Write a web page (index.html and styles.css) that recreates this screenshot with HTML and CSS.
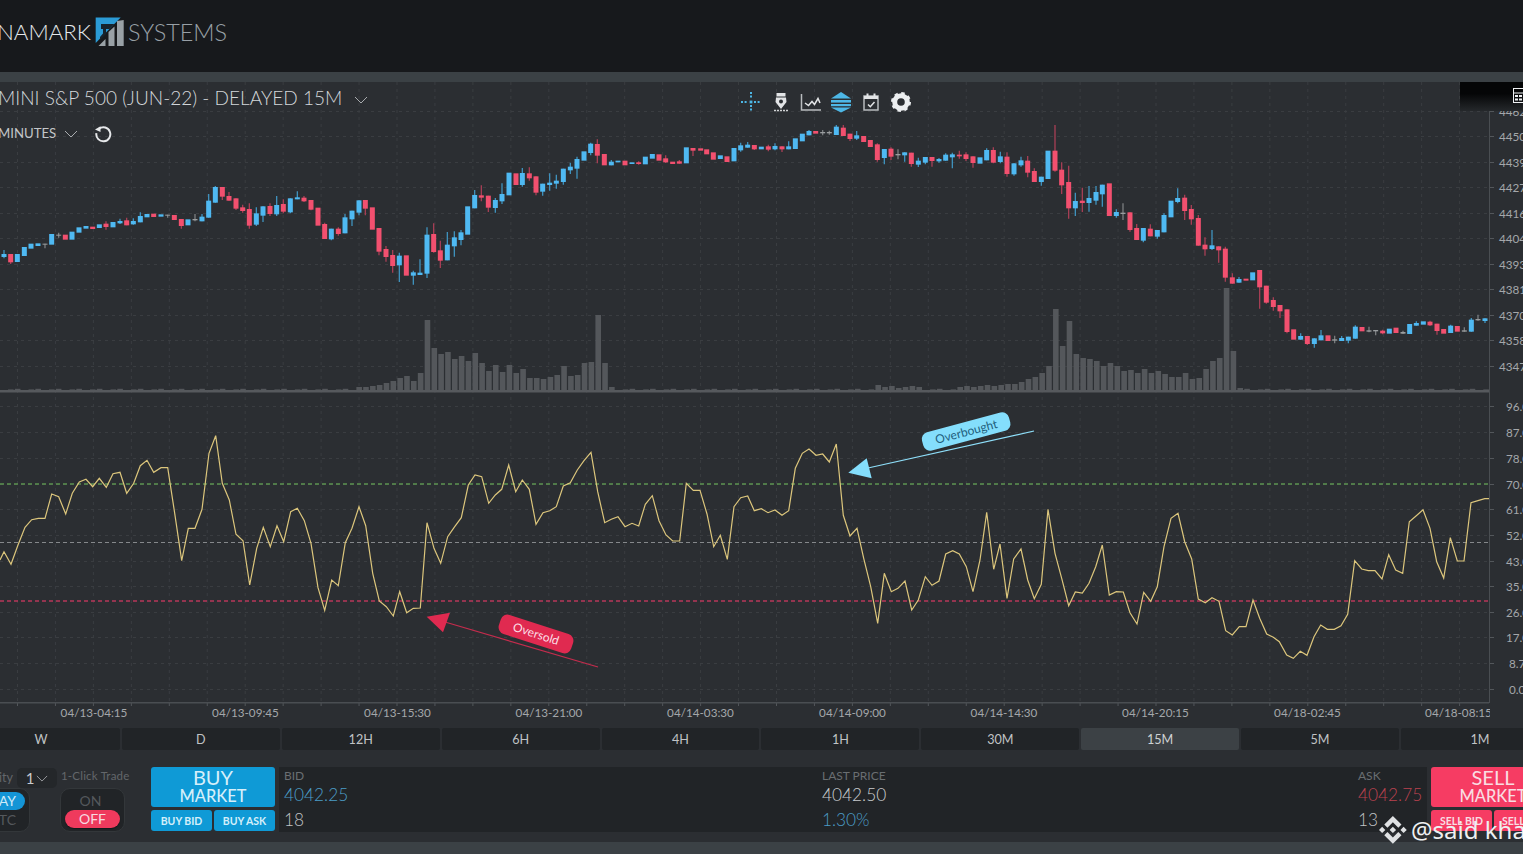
FILE: index.html
```html
<!DOCTYPE html>
<html lang="en">
<head>
<meta charset="utf-8">
<title>Dynamark Systems</title>
<link rel="stylesheet" href="styles.css">
</head>
<body>
<div class="app">
  <header class="masthead">
    <span class="brand-name">NAMARK</span>
    <svg class="brand-mark" viewBox="0 0 31 30" aria-hidden="true">
      <polygon class="mark-blue" points="0.7,0.5 25.7,0.5 0.7,26"/>
      <polygon class="mark-dark" points="6,7 19.5,7 14.5,12 11,12 11,17 5,23 5,20 8,16.5 8,12 6,12"/>
      <polygon class="mark-grey" points="22,4 28.7,3 28.7,29 22,29"/>
      <polygon class="mark-grey" points="13.5,15 19.5,9.5 19.5,29 13.5,29"/>
      <polygon class="mark-grey" points="3.5,29 10.5,22 10.5,29"/>
    </svg>
    <span class="brand-sub">SYSTEMS</span>
  </header>
  <div class="strip"></div>
  <main class="chart">
    <svg class="plot" id="plot" viewBox="0 82 1523 646" aria-label="Price chart">
      <g id="grid"></g>
      <g id="volume"></g>
      <rect class="pane-rule" x="0" y="390" width="1489" height="2.5"/>
      <g id="candles"></g>
      <line class="lvl-green" x1="0" x2="1489" y1="484" y2="484"/>
      <line class="lvl-grey" x1="0" x2="1489" y1="542.5" y2="542.5"/>
      <line class="lvl-red" x1="0" x2="1489" y1="601" y2="601"/>
      <polyline class="rsi" id="rsi" points=""/>
      <line class="arrow-red" x1="445" y1="622" x2="598" y2="667"/>
      <polygon class="fill-red" points="426.7,616.7 450,612.7 443,632.3"/>
      <g transform="rotate(18 536 634)">
        <rect class="fill-red" x="498" y="624" width="76" height="20" rx="7"/>
        <text class="pill-text-red" x="536" y="638" text-anchor="middle">Oversold</text>
      </g>
      <line class="arrow-blue" x1="868" y1="468" x2="1034" y2="431"/>
      <polygon class="fill-blue" points="848.3,472.7 866.7,458.3 871.7,478.3"/>
      <g transform="rotate(-15 966 431)">
        <rect class="fill-blue" x="921" y="422" width="90" height="19" rx="7"/>
        <text class="pill-text-blue" x="966" y="436" text-anchor="middle">Overbought</text>
      </g>
      <rect class="axis-rule" x="1489" y="92" width="1" height="611"/>
      <rect class="axis-rule" x="0" y="702" width="1489" height="1.5"/>
      <g id="yaxis" class="axis-text"></g>
      <svg x="0" y="703" width="1490" height="24" viewBox="0 703 1490 24">
        <g id="xaxis" class="axis-text"></g>
      </svg>
    </svg>

    <div class="title-row">
      <span class="title">MINI S&amp;P 500 (JUN-22) - DELAYED 15M</span>
      <svg class="chev chev-title" viewBox="0 0 14 8"><polyline points="1,1 7,7 13,1"/></svg>
    </div>
    <div class="interval-row">
      <span class="interval">MINUTES</span>
      <svg class="chev chev-interval" viewBox="0 0 14 8"><polyline points="1,1 7,7 13,1"/></svg>
      <svg class="refresh" viewBox="0 0 18 18">
        <path d="M5.2 3.6 A7 7 0 1 1 2.4 8.2"/>
        <polygon points="1,4.5 6.5,1.2 6.5,7"/>
      </svg>
    </div>

    <div class="toolbar">
      <svg class="tool tool-blue" viewBox="0 0 20 20">
        <line class="dots" x1="0" x2="7" y1="10" y2="10"/>
        <line class="dots" x1="13" x2="20" y1="10" y2="10"/>
        <line class="dots" x1="10" x2="10" y1="0" y2="7"/>
        <line class="dots" x1="10" x2="10" y1="13" y2="20"/>
        <rect class="solid" x="8.6" y="8.6" width="2.8" height="2.8"/>
      </svg>
      <svg class="tool tool-white" viewBox="0 0 20 20">
        <rect class="solid" x="5.5" y="1" width="9" height="3.5"/>
        <path class="solid" fill-rule="evenodd" d="M5 5.5 H15 L15.5 10 L10 17 L4.5 10 Z M10 7.5 A2 2 0 1 0 10 11.5 A2 2 0 1 0 10 7.5 Z"/>
        <line class="dots-thin" x1="3" x2="17" y1="18.5" y2="18.5"/>
      </svg>
      <svg class="tool tool-white" viewBox="0 0 20 20">
        <polyline class="stroke grey" points="0.5,2 0.5,18 20,18"/>
        <polyline class="stroke" points="4,11 7.5,13.5 11,9.5 13.5,12.5 17,6.5 19,11"/>
      </svg>
      <svg class="tool tool-blue" viewBox="0 0 20 20">
        <polygon class="solid" points="10,0 20,6.5 0,6.5"/>
        <rect class="solid" x="0" y="8" width="20" height="2.6"/>
        <rect class="solid" x="0" y="12" width="20" height="2.2"/>
        <polygon class="solid" points="0,15.5 20,15.5 10,20.5"/>
      </svg>
      <svg class="tool tool-white" viewBox="0 0 20 20">
        <rect class="stroke grey" x="3" y="4" width="14" height="14"/>
        <rect class="solid" x="3" y="4" width="14" height="3"/>
        <rect class="solid" x="5.5" y="1.5" width="2" height="4"/>
        <rect class="solid" x="12.5" y="1.5" width="2" height="4"/>
        <polyline class="stroke" points="7,12.5 9.3,14.7 13.5,10"/>
      </svg>
      <svg class="tool tool-white" viewBox="0 0 20 20">
        <circle class="gear-ring" cx="10" cy="10" r="6.3"/>
        <circle class="gear-teeth" cx="10" cy="10" r="8.7"/>
      </svg>
    </div>

    <div class="corner">
      <svg class="corner-icon" viewBox="0 0 16 16">
        <rect x="0.5" y="0.5" width="15" height="14"/>
        <line x1="0.5" x2="15.5" y1="5" y2="5"/>
        <line class="dash" x1="2" x2="15" y1="8" y2="8"/>
        <line class="dash" x1="2" x2="15" y1="11.5" y2="11.5"/>
      </svg>
    </div>
  </main>

  <nav class="frames">
    <span class="frame">W</span>
    <span class="frame">D</span>
    <span class="frame">12H</span>
    <span class="frame">6H</span>
    <span class="frame">4H</span>
    <span class="frame">1H</span>
    <span class="frame">30M</span>
    <span class="frame frame-on">15M</span>
    <span class="frame">5M</span>
    <span class="frame">1M</span>
  </nav>

  <section class="tradebar">
    <div class="controls">
      <div class="ctl-a">
        <div class="qty-row">
          <span class="faint">ity</span>
          <span class="qty-box">1<svg class="chev chev-qty" viewBox="0 0 14 8"><polyline points="1,1 7,7 13,1"/></svg></span>
        </div>
        <div class="switch switch-tif">
          <span class="pill pill-blue">AY</span>
          <span class="off-label">TC</span>
        </div>
      </div>
      <div class="ctl-b">
        <div class="click-label">1-Click Trade</div>
        <div class="switch switch-click">
          <span class="off-label">ON</span>
          <span class="pill pill-red">OFF</span>
        </div>
      </div>
    </div>

    <div class="ticket ticket-buy">
      <button class="main-btn"><span class="big">BUY</span><span class="mid">MARKET</span></button>
      <div class="sub-row">
        <button class="sub-btn">BUY BID</button>
        <button class="sub-btn">BUY ASK</button>
      </div>
    </div>

    <div class="quotes">
      <div class="quote">
        <span class="q-label">BID</span>
        <span class="q-price q-blue">4042.25</span>
        <span class="q-size">18</span>
      </div>
      <div class="quote">
        <span class="q-label">LAST PRICE</span>
        <span class="q-price">4042.50</span>
        <span class="q-size q-blue">1.30%</span>
      </div>
      <div class="quote">
        <span class="q-label">ASK</span>
        <span class="q-price q-red">4042.75</span>
        <span class="q-size">13</span>
      </div>
    </div>

    <div class="ticket ticket-sell">
      <button class="main-btn"><span class="big">SELL</span><span class="mid">MARKET</span></button>
      <div class="sub-row">
        <button class="sub-btn">SELL BID</button>
        <button class="sub-btn">SELL ASK</button>
      </div>
    </div>
  </section>
  <div class="foot-gap"></div>
  <div class="foot-strip"></div>

  <div class="watermark">
    <svg class="wm-logo" viewBox="0 0 126.61 126.61">
      <path d="M38.171 53.203l24.588-24.587 24.6 24.6 14.307-14.307L62.759 0 23.864 38.896zM0 62.759l14.307-14.307 14.307 14.307-14.307 14.307zM38.171 72.316l24.588 24.586 24.6-24.599 14.315 14.299-.007.008-38.908 38.908-38.896-38.895-.02-.02zM96.903 62.765l14.307-14.307 14.307 14.307-14.307 14.307zM77.27 62.752h.006L62.759 48.235 52.03 58.964l-1.232 1.233-2.543 2.543-.02.02.02.021 14.504 14.504 14.517-14.517.007-.008z"/>
    </svg>
    <span class="wm-text">@said kha</span>
  </div>
</div>
<script src="chart.js"></script>
</body>
</html>
```
FILE: styles.css
```css
* { box-sizing: border-box; }
html, body { margin: 0; padding: 0; }
body { width: 1523px; height: 854px; overflow: hidden; background: #2b2e32; font-family: "Lato", "Liberation Sans", sans-serif; }
.app { position: relative; display: flex; flex-direction: column; width: 1523px; height: 854px; overflow: hidden; }

/* masthead */
.masthead { display: flex; align-items: center; height: 72px; flex: none; background: #17191c; padding-bottom: 8px; }
.brand-name { margin-left: -3px; width: 98px; font-size: 22.3px; font-weight: 300; color: #e6e9ec; line-height: 30px; white-space: nowrap; }
.brand-mark { width: 31px; height: 30px; flex: none; }
.mark-blue { fill: #2b9bd6; }
.mark-dark { fill: #17232c; }
.mark-grey { fill: #99a1a6; }
.brand-sub { margin-left: 2px; font-size: 23.4px; font-weight: 300; color: #98a0a6; line-height: 30px; }
.strip { height: 10px; flex: none; background: #3b4145; }

/* chart */
.chart { position: relative; height: 646px; flex: none; background: #2b2e32; }
.plot { display: block; width: 1523px; height: 646px; }
.grid-line { stroke: #3a3d41; stroke-width: 1; stroke-dasharray: 3 4; }
.pane-rule { fill: #56595d; }
.axis-rule { fill: #4a4e52; }
.tick { stroke: #53575b; stroke-width: 1; }
.vol { fill: #54575b; }
.wick-b { stroke: #3f93bf; stroke-width: 1.3; }
.wick-r { stroke: #a83f56; stroke-width: 1.3; }
.wick-g { stroke: #7b7e81; stroke-width: 1.3; }
.body-b { fill: #4fb9f2; }
.body-r { fill: #f2506f; }
.body-g { fill: #9a9d9f; }
.lvl-green, .lvl-red { stroke-width: 1.4; stroke-dasharray: 4 3; }
.lvl-green { stroke: #5c9350; }
.lvl-red { stroke: #b8375a; }
.lvl-grey { stroke: #85888b; stroke-width: 1; stroke-dasharray: 4 3; }
.rsi { fill: none; stroke: #dcc67c; stroke-width: 1.2; stroke-linejoin: miter; }
.arrow-red { stroke: #c42c4d; stroke-width: 1.2; }
.arrow-blue { stroke: #8fe0fb; stroke-width: 1.2; }
.fill-red { fill: #e02a50; }
.fill-blue { fill: #84defc; }
.pill-text-red { font-size: 12px; font-weight: 400; fill: #fbdfe5; }
.pill-text-blue { font-size: 12px; font-weight: 400; fill: #1f5f7c; }
.axis-text text { font-size: 11.7px; fill: #a4a7aa; }
.axis-x-label { text-anchor: middle; }

.title-row { position: absolute; left: -2px; top: 2px; display: flex; align-items: center; height: 26px; }
.title { font-size: 19.05px; font-weight: 300; color: #d3d7da; white-space: nowrap; }
.interval-row { position: absolute; left: -2px; top: 40px; display: flex; align-items: center; height: 22px; }
.interval { font-size: 13.2px; color: #c3c6c9; }
.chev { fill: none; }
.chev polyline { fill: none; stroke: #a9acaf; stroke-width: 1; }
.chev-title { width: 14px; height: 8px; margin-left: 12px; margin-top: 6px; }
.chev-interval { width: 14px; height: 8px; margin-left: 8px; margin-top: 2px; }
.refresh { width: 18px; height: 18px; margin-left: 16px; margin-top: 2px; }
.refresh path { fill: none; stroke: #e6e8ea; stroke-width: 2; }
.refresh polygon { fill: #e6e8ea; }

.toolbar { position: absolute; left: 741px; top: 10px; display: flex; gap: 10px; }
.tool { width: 20px; height: 20px; display: block; overflow: visible; }
.tool-blue .solid { fill: #4db7e6; }
.tool-white .solid { fill: #e2e4e6; }
.dots { stroke: #4db7e6; stroke-width: 2; stroke-dasharray: 2 1.6; }
.dots-thin { stroke: #d0d2d4; stroke-width: 1.5; stroke-dasharray: 2 1; }
.stroke { fill: none; stroke: #e2e4e6; stroke-width: 1.5; }
.stroke.grey { stroke: #b9bcbf; }
.gear-ring { fill: none; stroke: #eceef0; stroke-width: 5; }
.gear-teeth { fill: none; stroke: #eceef0; stroke-width: 2.6; stroke-dasharray: 3.4 3.43; }

.corner { position: absolute; right: 0; top: 0; width: 63px; height: 29px; background: linear-gradient(#050607 0 40%, #25282b 100%); }
.corner-icon { position: absolute; left: 53px; top: 6px; width: 16px; height: 16px; }
.corner-icon rect { fill: none; stroke: #f0f2f4; stroke-width: 1; }
.corner-icon line { stroke: #f0f2f4; stroke-width: 1; }
.corner-icon .dash { stroke-dasharray: 3 1; stroke-width: 2; }

/* timeframe row */
.frames { display: flex; gap: 2px; height: 22px; flex: none; margin-left: -38px; }
.frame { flex: none; width: 157.9px; height: 22px; border-radius: 2px; background: #212427; color: #c0c3c5; font-size: 12.6px; line-height: 23px; text-align: center; }
.frame-on { background: #3c4145; color: #cfd2d4; }

/* trading bar */
.tradebar { display: flex; height: 65px; flex: none; margin-top: 17px; width: 1640px; }
.controls { display: flex; flex: none; width: 151px; }
.ctl-a { width: 60px; flex: none; }
.ctl-b { width: 91px; flex: none; }
.qty-row { display: flex; align-items: center; height: 21px; margin-left: -1px; gap: 3px; }
.faint { color: #63676b; font-size: 12.5px; line-height: 18px; width: 15px; }
.qty-box { display: flex; align-items: center; justify-content: center; gap: 2px; width: 40px; height: 20px; border-radius: 5px; background: #24272a; color: #c8cbcd; font-size: 15px; }
.chev-qty { width: 12px; height: 7px; margin-top: 2px; }
.click-label { height: 21px; margin-left: 1px; color: #63676b; font-size: 11.5px; line-height: 18px; letter-spacing: .2px; white-space: nowrap; }
.switch { display: flex; flex-direction: column; align-items: stretch; height: 44px; border-radius: 10px; background: #212427; border: 1px solid #33373a; padding: 3px 4px 4px; }
.switch-tif { width: 64px; margin-left: -34px; }
.switch-click { width: 65px; }
.pill { height: 18px; border-radius: 9px; font-size: 14px; line-height: 18px; }
.pill-blue { background: #1495d6; color: #cfeaf7; text-align: right; padding-right: 9px; }
.pill-red { background: #ef3a5d; color: #f7dbe1; text-align: center; box-shadow: 0 1px 1px #15171a; }
.off-label { height: 18px; color: #54585c; font-size: 14px; line-height: 18px; }
.switch-tif .off-label { text-align: right; padding-right: 9px; margin-top: 1px; }
.switch-click .off-label { text-align: center; padding-right: 4px; }

.ticket { display: flex; flex-direction: column; gap: 3px; flex: none; width: 124px; }
button { font-family: inherit; border: 0; padding: 0; }
.main-btn { display: flex; flex-direction: column; align-items: center; height: 40px; border-radius: 3px; }
.big { font-size: 20px; line-height: 20px; font-weight: 400; }
.mid { font-size: 16.4px; line-height: 18px; font-weight: 500; }
.sub-row { display: flex; gap: 2px; height: 21px; }
.sub-btn { flex: 1; height: 21px; border-radius: 3px; font-size: 10.5px; font-weight: 700; white-space: nowrap; overflow: hidden; }
.ticket-buy .main-btn, .ticket-buy .sub-btn { background: #0f9ad6; color: #d5effa; }
.ticket-sell .main-btn, .ticket-sell .sub-btn { background: #f63c63; color: #f9dce2; }

.quotes { display: grid; grid-template-columns: 538px 536px 1fr; flex: none; width: 1148px; margin: 0 4px; padding-left: 5px; background: #212427; }
.quote { display: flex; flex-direction: column; }
.q-label { color: #6a6e72; font-size: 12px; line-height: 18px; }
.q-price { color: #c8cbcd; font-size: 17.3px; font-weight: 300; line-height: 20px; }
.q-size { color: #c0c3c5; font-size: 17.3px; font-weight: 300; line-height: 29px; }
.q-blue { color: #4b9cc6; }
.q-red { color: #b9424f; }

.foot-gap { height: 10px; flex: none; }
.foot-strip { height: 12px; flex: none; background: #3b4145; }

.watermark { position: absolute; left: 1379px; top: 816px; display: flex; align-items: center; gap: 4px; height: 28px; white-space: nowrap; }
.wm-logo { width: 28px; height: 28px; fill: #dfe1e3; }
.wm-text { font-family: "Noto Sans", sans-serif; font-size: 24px; line-height: 28px; color: #eef0f1; }
```
FILE: chart.js
```js
var NS = 'http://www.w3.org/2000/svg';
function el(parent, name, attrs, text) {
  var n = document.createElementNS(NS, name);
  for (var k in attrs) n.setAttribute(k, attrs[k]);
  if (text) n.textContent = text;
  parent.appendChild(n);
  return n;
}

/* grid */
var grid = document.getElementById('grid');
var i, x, y;
for (x = 17.5; x < 1489; x += 37.95) {
  el(grid, 'line', { 'class': 'grid-line', x1: x, x2: x, y1: 82, y2: 702 });
  el(grid, 'line', { 'class': 'tick', x1: x, x2: x, y1: 703, y2: 706 });
}
var priceRows = [111.5, 136.5, 162.5, 187.5, 213.5, 238.5, 264.5, 289.5, 315.5, 340.5, 366.5];
var rsiRows = [406.5, 432.5, 458.5, 484.5, 509.5, 535.5, 561.5, 586.5, 612.5, 637.5, 663.5, 689.5];
priceRows.concat(rsiRows).forEach(function (r) {
  el(grid, 'line', { 'class': 'grid-line', x1: 0, x2: 1489, y1: r, y2: r });
  el(grid, 'line', { 'class': 'tick', x1: 1490, x2: 1494, y1: r, y2: r });
});

/* axis labels */
var yaxis = document.getElementById('yaxis');
['4462.5', '4450.9', '4439.3', '4427.7', '4416.1', '4404.5', '4393.0', '4381.4', '4370.0', '4358.2', '4347.0'].forEach(function (t, n) {
  el(yaxis, 'text', { x: 1499, y: priceRows[n] + 4 }, t);
});
['96.0', '87.0', '78.0', '70.0', '61.0', '52.0', '43.0', '35.0', '26.0', '17.0', '8.7', '0.0'].forEach(function (t, n) {
  el(yaxis, 'text', { x: t.length === 3 ? 1509 : 1506, y: rsiRows[n] + 4 }, t);
});
var xaxis = document.getElementById('xaxis');
[[94, '04/13-04:15'], [245.5, '04/13-09:45'], [397.5, '04/13-15:30'], [549, '04/13-21:00'], [700.5, '04/14-03:30'],
 [852.5, '04/14-09:00'], [1004, '04/14-14:30'], [1155.5, '04/14-20:15'], [1307.5, '04/18-02:45'], [1458.5, '04/18-08:15']].forEach(function (l) {
  el(xaxis, 'text', { 'class': 'axis-x-label', x: l[0], y: 717 }, l[1]);
});

/* volume */
var peaks = {
  52: 4, 53: 4, 54: 5, 55: 6, 56: 8, 57: 10, 58: 13, 59: 15, 60: 10, 61: 18,
  62: 71, 63: 43, 64: 37, 65: 39, 66: 32, 67: 35, 68: 30, 69: 38, 70: 28, 71: 20, 72: 26, 73: 19, 74: 26, 75: 18,
  76: 22, 77: 13, 78: 13, 79: 12, 80: 14, 81: 16, 82: 25, 83: 15, 84: 16, 85: 28, 86: 29, 87: 76, 88: 28, 89: 4,
  128: 6, 129: 4, 130: 5, 131: 3, 132: 4, 133: 5, 134: 4, 140: 4, 141: 5, 142: 4, 143: 5, 144: 6, 145: 5, 146: 6, 147: 7,
  148: 7, 149: 9, 150: 12, 151: 14, 152: 18, 153: 25,
  154: 82, 155: 45, 156: 70, 157: 37, 158: 33, 159: 32, 160: 30, 161: 25, 162: 28, 163: 25, 164: 20, 165: 21, 166: 18,
  167: 22, 168: 18, 169: 20, 170: 17, 171: 14, 172: 14, 173: 18, 174: 12, 175: 13, 176: 22, 177: 30, 178: 33,
  179: 103, 180: 40, 181: 3
};
var vol = document.getElementById('volume');
for (i = 0; i < 218; i++) {
  var h = peaks[i] || (1 + (i * 7 % 3) * 0.6);
  el(vol, 'rect', { 'class': 'vol', x: 4 + 6.83 * i - 2.8, y: 391 - h, width: 5.6, height: h });
}

/* candles: colour, crop x, body top, body bottom, wick top, wick bottom (crop units, 3x) */
var candleRuns = [
  { dx: 0, dy: 130, d: 'b 12 372 381 360 385;r 32 372 397 372 402;b 52 372 396;b 73 351 378;b 93 341 356;b 114 340 348;g 135 341 344 341 355;b 155 312 344;g 176 314 317 308 323;r 196 314 329;b 216 305 329;b 237 292 308;b 258 288 296;r 278 290 297;b 298 283 294;r 318 281 291 274 299;b 339 276 292;b 360 273 280 266 282;r 380 271 286 263 286;b 400 273 283 265 284;b 421 258 277 247 277;b 441 252 262;r 461 251 261;b 483 253 260;g 503 254 257 254 263;r 523 255 270;r 544 267 288 267 296;b 564 268 286;g 585 267 271 252 274;b 606 260 274 252 274;b 626 212 263 192 263;b 646 171 218 168 218;r 667 171 200 171 210;r 687 198 212 186 212;r 708 205 236 205 240;r 728 232 243 224 248;r 748 237 287 220 296;b 769 250 284 232 288;b 789 229 257 229 276;r 810 228 252 220 258;b 830 225 253 198 258;r 850 222 245 208 250;b 871 205 247 205 250;b 892 202 208 184 208;r 912 203 214 198 216;r 933 210 239 210 241;r 954 233 287;r 974 282 327 278 327;b 994 296 328 296 331;r 1015 296 312 292 317;b 1035 262 310 252 310' },
  { dx: 350, dy: 130, d: 'b 6 242 268 242 288;b 27 211 248 211 256;r 46 210 236 210 256;r 67 232 299;r 87 294 365 294 376;r 108 357 381 348 395;r 128 375 408 360 428;b 148 377 406 368 456;r 169 376 437;b 190 427 437 422 464;b 210 428 435 388 435;b 231 314 431 292 444;r 251 312 366 280 368;r 271 361 392 332 414;b 292 344 391 306 391;b 313 322 349 304 380;b 333 307 330 300 346;b 353 229 314;b 374 195 235 180 235;r 394 196 203 166 214;r 415 197 233 197 246;b 436 210 234 204 248;b 456 192 214 160 222;b 477 128 196;r 498 130 165;b 517 129 165 114 170;r 538 130 145 112 152;r 558 139 188 139 196;b 578 161 185 161 197;b 599 158 165 130 182;b 619 152 161 134 176;b 640 116 156 116 164;b 661 110 121 98 132;b 681 87 116 80 146;b 702 64 92;b 722 41 69 38 76;r 742 42 77 28 100;r 763 72 106;b 784 95 106 90 106;b 804 92 97;r 825 92 106;b 846 97 102;r 866 97 102 94 104;b 886 80 103;b 907 72 86;r 927 73 92;r 947 85 97 76 99;r 968 95 102;r 988 94 101 90 101;b 1009 52 100;r 1029 54 62 54 78' },
  { dx: 700, dy: 120, d: 'r 2 85 92;r 20 88 103;r 40 97 119;b 61 106 117;r 81 109 126;b 102 84 124;b 122 76 91 68 95;b 143 74 83 66 83;r 163 75 88 75 90;b 184 80 88;r 205 79 89 74 94;b 225 78 88 70 91;r 246 79 88 79 96;b 266 79 88 64 88;b 286 55 87;b 307 41 64;b 327 33 46 30 46;r 347 33 41;g 368 36 40 30 46;g 388 36 40 32 44;b 409 20 45 15 45;r 430 23 48 15 48;r 450 41 57 41 63;b 470 46 56 33 60;r 491 48 66;r 511 60 81;r 532 73 120 70 125;b 553 87 114 87 133;r 573 86 110 82 120;g 594 102 106 88 118;b 614 97 106 97 125;r 634 98 132 98 140;b 655 122 134 113 141;b 676 111 128 111 133;r 696 111 123 111 140;b 717 117 124 114 128;b 737 104 122 100 122;b 757 103 112 98 145;r 778 104 109 92 116;r 798 103 117 97 123;r 819 109 129 109 143;b 840 112 131;b 860 90 121 85 121;r 880 90 128 82 130;b 901 109 126 95 130;r 921 110 162 97 170;b 942 130 163 130 167;b 963 121 136 110 140;r 983 122 158 108 172;r 1003 153 186 145 186;b 1024 170 186 170 197;b 1044 92 177;r 1065 92 152 15 155;r 1085 149 196 127 222;r 1106 186 265 137 296;b 1126 243 265 218 288;r 1147 242 249 203 276;b 1167 234 249 198 275;b 1188 216 242 198 254' },
  { dx: 1100, dy: 180, d: 'b 7 14 43 14 80;r 28 10 108;b 49 96 108 88 113;g 69 98 102 70 120;r 90 97 150 97 155;r 110 144 180 132 180;b 130 144 182 144 187;r 151 146 169 133 169;b 172 150 170 150 176;b 192 105 157 100 157;b 213 62 112;b 233 54 66 25 70;r 254 53 93 44 120;r 274 87 118 75 134;r 295 114 197 105 197;r 315 194 208 172 227;b 336 196 207 150 210;r 356 199 211 199 248;r 376 206 293 200 305;r 397 292 311 280 311;b 417 297 308 291 308;r 438 296 302;b 458 277 301;r 479 270 322 270 386;r 499 317 368 317 371;r 520 360 381 352 392;r 540 375 394 375 414;r 561 388 456 388 460;r 581 448 479;b 602 468 479 460 479;r 622 468 492 468 495;b 643 475 492 475 503;b 663 466 481 450 481;r 684 466 483;g 704 478 482 467 490;b 725 474 483 468 483;b 745 470 482 470 490;b 766 440 476 436 476;r 786 441 454;g 807 451 455 440 457;g 827 450 454 450 466;r 848 452 460 449 463;b 868 446 461;r 888 443 459;g 909 456 461 452 462;b 929 432 462;b 949 429 437 424 437;b 970 424 434;r 990 425 436 422 438;r 1011 431 453 431 464;r 1031 447 461;b 1052 437 459 434 459;r 1072 438 455;g 1093 451 455 442 455;b 1114 419 455 414 455;g 1134 417 421 404 422;b 1155 415 423 415 429' }
];
var candles = document.getElementById('candles');
candleRuns.forEach(function (run) {
  run.d.split(';').forEach(function (entry) {
    var p = entry.split(' ');
    var c = p[0], cx = +p[1] / 3 + run.dx;
    var top = +p[2] / 3 + run.dy, bot = +p[3] / 3 + run.dy;
    var wt = (p[4] ? +p[4] : +p[2]) / 3 + run.dy, wb = (p[5] ? +p[5] : +p[3]) / 3 + run.dy;
    if (wt < top || wb > bot) el(candles, 'line', { 'class': 'wick-' + c, x1: cx, x2: cx, y1: wt, y2: wb });
    el(candles, 'rect', { 'class': 'body-' + c, x: cx - 2.5, y: top, width: 5, height: bot - top });
  });
});

/* RSI: crop coordinates at 3x */
var rsiRuns = [
  { dx: 0, dy: 420, d: '0 420 12 395 33 433 54 375 75 322 95 299 115 295 135 295 155 222 176 230 197 282 217 220 238 186 258 178 278 200 298 175 319 202 339 161 360 157 380 220 401 190 421 137 441 121 461 157 483 143 503 143 524 280 545 422 565 325 585 325 606 268 627 100 647 47 667 190 688 240 708 343 729 362 749 495 770 385 790 322 811 380 831 317 851 365 872 275 892 265 913 302 933 370 954 503 974 571 995 480 1015 497 1036 368 1056 325 1077 260 1097 317 1118 460 1138 543 1159 560 1180 588 1199 515 1220 578 1240 565 1261 564 1281 308 1302 385 1322 430 1343 350 1364 320 1384 293 1405 195 1425 165 1445 170 1466 250 1486 225' },
  { dx: 500, dy: 410, d: '5 238 26 165 47 245 67 210 88 238 108 343 129 308 149 302 169 290 190 228 211 218 232 180 252 152 273 127 293 245 314 338 334 328 354 320 375 350 396 340 416 348 436 283 457 257 477 332 498 375 518 393 539 393 559 220 580 241 600 241 621 312 641 410 661 376 682 448 702 290 722 263 743 258 763 302 784 296 804 308 825 300 846 316 866 302 886 175 907 130 927 117 948 136 968 132 988 156 1009 102 1030 316 1050 378 1071 355 1091 445 1112 530 1133 640 1153 490 1174 545 1194 535 1215 513 1235 600 1255 570 1276 500 1296 526 1317 513 1337 432 1358 422 1378 432 1399 470 1419 545 1440 450 1460 307 1481 478' },
  { dx: 1000, dy: 460, d: '0 252 21 415 41 297 63 267 83 360 103 416 124 373 144 148 165 280 185 355 206 437 226 396 247 399 267 370 287 320 307 255 328 405 349 395 370 396 390 458 411 492 431 397 452 424 472 380 492 260 513 175 534 160 554 245 575 297 595 417 616 428 636 413 657 424 677 512 697 525 718 500 738 500 759 420 779 475 800 522 820 532 838 545 860 585 880 595 901 574 921 586 942 530 962 495 982 508 1003 508 1023 497 1043 463 1064 302 1085 327 1105 332 1125 332 1146 357 1166 284 1187 330 1208 340 1228 185 1249 167 1269 149 1290 205 1310 305 1331 354 1351 233 1372 303 1392 303 1413 128 1434 122 1454 116 1468 116' }
];
var pts = [];
rsiRuns.forEach(function (run) {
  var v = run.d.split(' ');
  for (var j = 0; j < v.length; j += 2) {
    pts.push((+v[j] / 3 + run.dx).toFixed(1) + ',' + (+v[j + 1] / 3 + run.dy).toFixed(1));
  }
});
document.getElementById('rsi').setAttribute('points', pts.join(' '));
```
